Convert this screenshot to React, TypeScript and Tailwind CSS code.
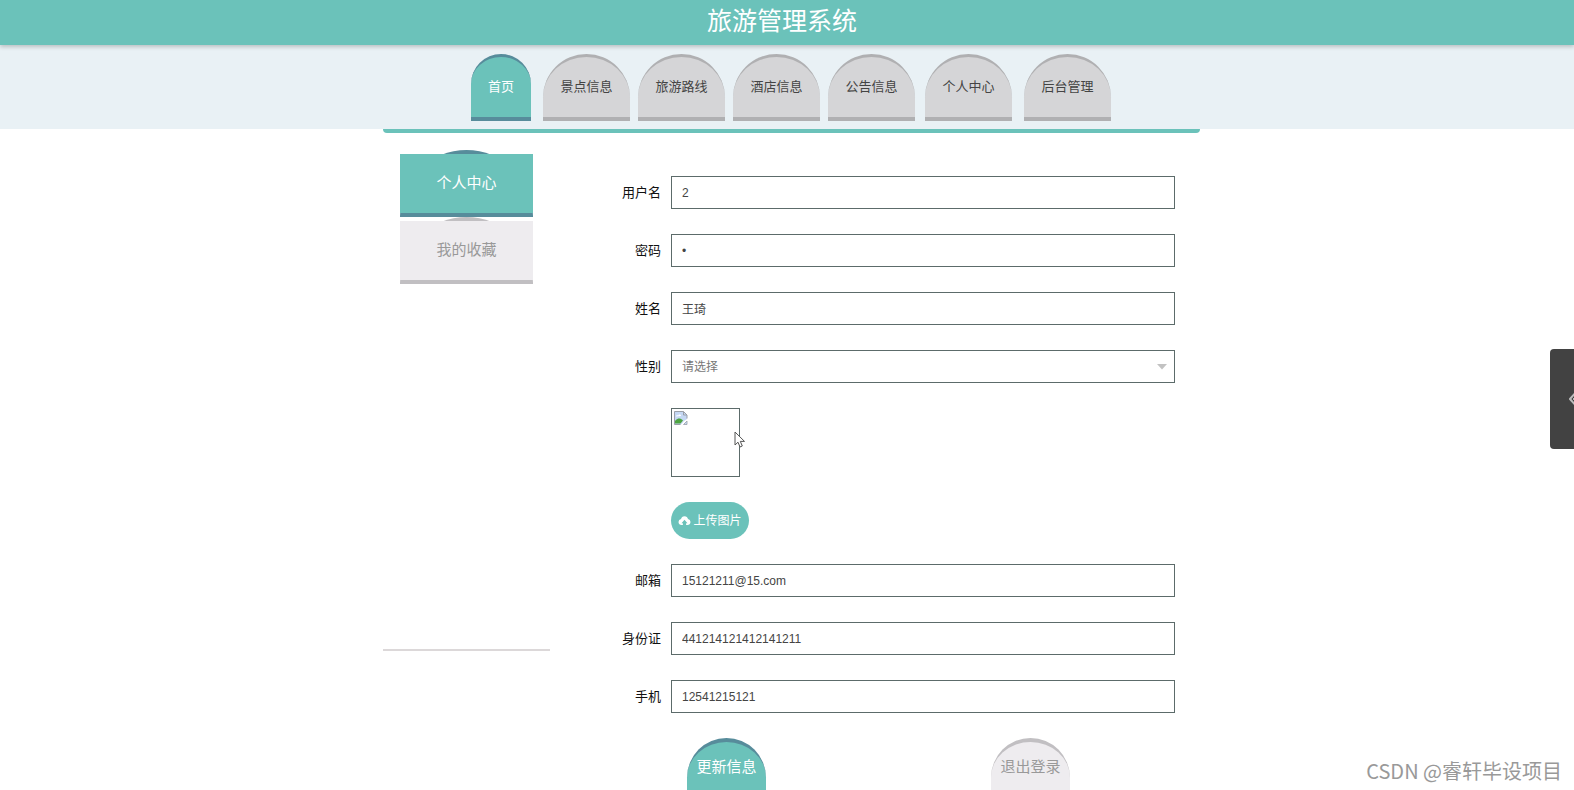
import { useState } from "react";
import clsx from "clsx";

const navItems = [
  { label: "首页", gap: "" },
  { label: "景点信息", gap: "ml-3" },
  { label: "旅游路线", gap: "ml-2" },
  { label: "酒店信息", gap: "ml-2" },
  { label: "公告信息", gap: "ml-2" },
  { label: "个人中心", gap: "ml-[10px]" },
  { label: "后台管理", gap: "ml-3" },
];

const profileFields = [
  { id: "username", label: "用户名", value: "2", type: "text" },
  { id: "password", label: "密码", value: "2", type: "password" },
  { id: "name", label: "姓名", value: "王琦", type: "text" },
];

const contactFields = [
  { id: "email", label: "邮箱", value: "15121211@15.com", type: "text" },
  { id: "idcard", label: "身份证", value: "441214121412141211", type: "text" },
  { id: "phone", label: "手机", value: "12541215121", type: "text" },
];

const controlClass =
  "h-[33px] w-full border border-[#5c6b6a] bg-white px-[10px] text-xs outline-none";

interface FieldProps {
  id: string;
  label: string;
  value: string;
  type: string;
}

const FieldLabel = ({ id, label }: { id: string; label: string }) => (
  <label htmlFor={id} className="w-[111px] shrink-0 text-right text-[13px] text-[#111]">
    {label}
  </label>
);

const Field = ({ id, label, value, type }: FieldProps) => {
  const [text, setText] = useState(value);

  return (
    <div className="flex items-center gap-[10px]">
      <FieldLabel id={id} label={label} />
      <input
        id={id}
        type={type}
        value={text}
        onChange={(e) => setText(e.target.value)}
        className={clsx(controlClass, "text-[#444]")}
      />
    </div>
  );
};

const Header = () => (
  <header className="relative z-10 flex h-[45px] items-center justify-center bg-[#6bc2ba] pr-[10px] pb-1 shadow-[0_2px_4px_rgba(0,0,0,0.2)]">
    <h1 className="text-[25px] leading-[38px] text-white">旅游管理系统</h1>
  </header>
);

const Nav = () => (
  <nav className="flex justify-center bg-[#e9f1f5] pt-[9px] pb-2 pl-2">
    {navItems.map((item, i) => (
      <a
        key={item.label}
        href="#"
        className={clsx(
          "flex h-[67px] items-center justify-center rounded-t-full border-t-[3px] border-b-4 text-[13px]",
          item.gap,
          i === 0
            ? "w-[60px] border-[#578c9b] bg-[#6bc2ba] text-white"
            : "w-[87px] border-[#b0b0b2] bg-[#d5d5d7] text-[#444]"
        )}
      >
        {item.label}
      </a>
    ))}
  </nav>
);

const Sidebar = () => (
  <aside className="h-[518px] w-[167px] shrink-0 border-b-2 border-[#dcd8d9] px-[17px] pt-[17px] text-center text-[15px]">
    <ul>
      <li className="h-[67px] rounded-t-full border-y-4 border-[#578c9b]">
        <a href="#" className="block h-full bg-[#6bc2ba] leading-[57px] text-white">
          个人中心
        </a>
      </li>
      <li className="h-[67px] rounded-t-full border-y-4 border-[#c1bfc2]">
        <a href="#" className="block h-full bg-[#eeecef] leading-[57px] text-[#999]">
          我的收藏
        </a>
      </li>
    </ul>
  </aside>
);

const BrokenImage = () => (
  <svg width="16" height="16" viewBox="0 0 16 16">
    <path d="M1.5 1.5h9l3.5 3.5v4l-3 2-3 3.500H1.500z" fill="#c5d8f4" />
    <path d="M2 13.500V11c1.500-2 3-2.500 4.500-2.500S9 9.500 10 10.500L7.500 13.500z" fill="#4da441" />
    <path d="M3 6.500c0-1.500 2-1.500 2.200-.8C5.500 4 8 4.200 8 6z" fill="#fff" />
    <path d="M7.500 14.500H1.500v-13h9l3.500 3.500v3.500M10.500 1.500V5H14" fill="none" stroke="#9a9fa8" />
    <path d="M10.500 14.500H14V11z" fill="#c5d8f4" stroke="#9a9fa8" strokeWidth=".8" />
  </svg>
);

const CloudUpload = () => (
  <svg width="13" height="12" viewBox="0 0 13 12" fill="currentColor">
    <path d="M6.500 1.200A3.600 3.600 0 0 0 3 4.100 3.100 3.100 0 0 0 .5 7.100C.5 9 1.900 10 3.600 10h1.300V8.200H3.500L6.500 4.800 9.500 8.200H8.100V10h1.300c1.700 0 3.100-1 3.100-2.900A3.100 3.100 0 0 0 10 4.100 3.600 3.600 0 0 0 6.500 1.200z" />
  </svg>
);

const Pointer = () => (
  <svg className="absolute top-[22px] left-[62px]" width="12" height="18" viewBox="0 0 12 18">
    <path
      d="M1 1v13l3-2.800 2 4.800 2.300-1-2-4.600h4.200z"
      fill="#fff"
      stroke="#555"
      strokeWidth="1"
    />
  </svg>
);

const ProfileForm = () => (
  <form className="flex min-w-0 flex-1 flex-col gap-[25px] pt-[43px] pr-[25px]">
    {profileFields.map((field) => (
      <Field key={field.id} {...field} />
    ))}

    <div className="flex items-center gap-[10px]">
      <FieldLabel id="gender" label="性别" />
      <div className="relative flex-1">
        <select
          id="gender"
          defaultValue=""
          className={clsx(controlClass, "block appearance-none text-[#777]")}
        >
          <option value="">请选择</option>
          <option value="男">男</option>
          <option value="女">女</option>
        </select>
        <svg
          className="pointer-events-none absolute top-[14px] right-2"
          width="10"
          height="6"
          viewBox="0 0 10 6"
        >
          <path d="M0 0h10L5 5.500z" fill="#c2c2c2" />
        </svg>
      </div>
    </div>

    <div className="relative ml-[121px] h-[69px] w-[69px] border border-[#5c6b6a] p-px">
      <BrokenImage />
      <Pointer />
    </div>

    <button
      type="button"
      className="ml-[121px] flex h-[37px] w-[78px] items-center justify-center gap-0.5 rounded-full bg-[#6bc2ba] text-xs whitespace-nowrap text-white"
    >
      <CloudUpload />
      上传图片
    </button>

    {contactFields.map((field) => (
      <Field key={field.id} {...field} />
    ))}

    <div className="ml-[121px] grid grid-cols-2 gap-[120px] pl-4 text-[15px]">
      <button
        type="submit"
        className="h-[67px] w-[79px] rounded-t-full border-y-4 border-[#578c9b] bg-[#6bc2ba] pb-2 text-white"
      >
        更新信息
      </button>
      <button
        type="button"
        className="h-[67px] w-[79px] rounded-t-full border-y-4 border-[#c1bfc2] bg-[#eeecef] pb-2 text-[#999]"
      >
        退出登录
      </button>
    </div>
  </form>
);

const App = () => (
  <div className="relative h-screen overflow-hidden bg-white font-['Liberation_Sans','Noto_Sans_CJK_SC',sans-serif]">
    <Header />
    <Nav />
    <main className="flex justify-center pl-[9px]">
      <div className="w-full max-w-[817px]">
        <div className="h-1 rounded-b bg-[#6bc2ba]" />
        <div className="flex items-start">
          <Sidebar />
          <ProfileForm />
        </div>
      </div>
    </main>

    <button
      type="button"
      aria-label="展开"
      className="absolute top-[349px] right-0 flex h-[100px] w-6 items-center justify-end rounded-l bg-[#424242]"
    >
      <svg width="5" height="12" viewBox="0 0 5 12">
        <path d="M6 0.500L1 6l5 5.500" fill="none" stroke="#bbb" strokeWidth="2" />
        <path d="M6 4L4 6l2 2" fill="none" stroke="#bbb" />
      </svg>
    </button>
    <p className="absolute right-3 bottom-[5px] font-['Noto_Sans_CJK_SC',sans-serif] text-xl leading-7 text-[#999]">
      CSDN @睿轩毕设项目
    </p>
  </div>
);

export default App;
